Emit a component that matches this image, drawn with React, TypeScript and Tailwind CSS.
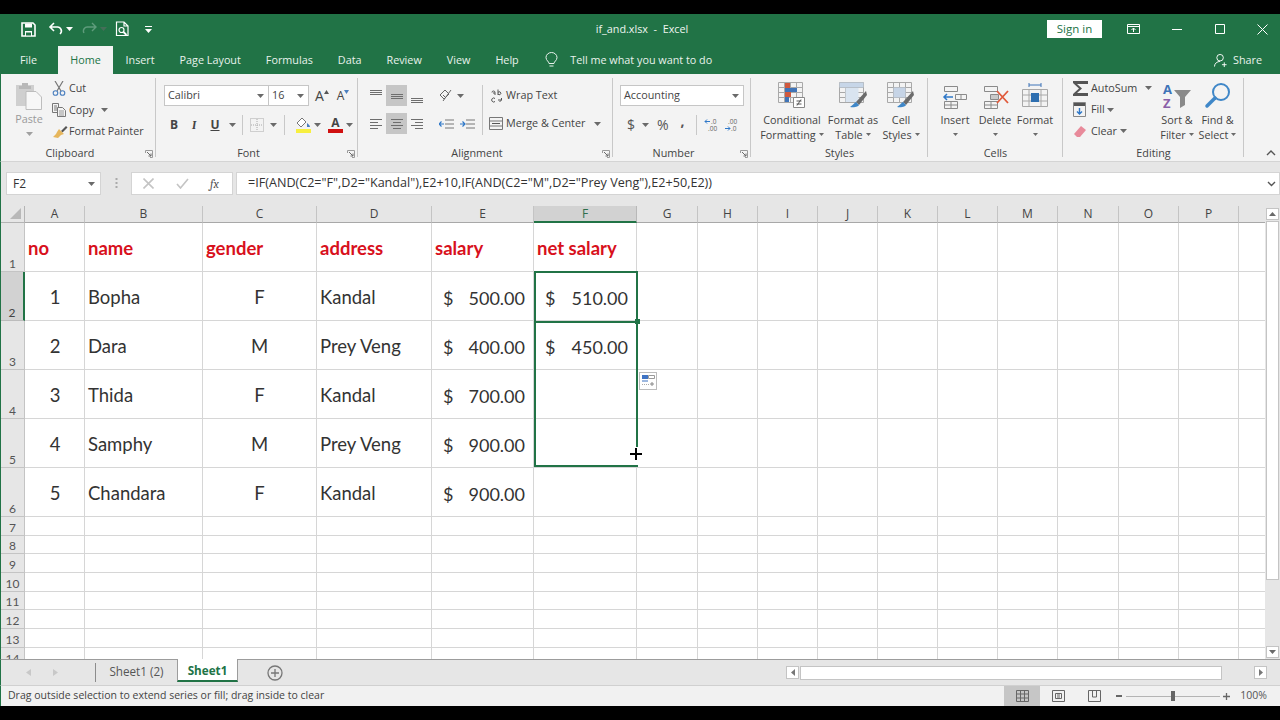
import type { ReactNode } from "react";

const uiFont = { fontFamily: '"Open Sans", "Noto Sans", sans-serif' };

const Caret = ({ className = "" }: { className?: string }) => (
  <svg width="7" height="4" viewBox="0 0 7 4" className={className}>
    <path d="M0 0h7L3.5 4z" fill="#6a6a6a" />
  </svg>
);

const SmallCaret = () => (
  <svg width="5" height="3" viewBox="0 0 5 3">
    <path d="M0 0h5L2.500 3z" fill="#6a6a6a" />
  </svg>
);

const Launcher = () => (
  <svg width="8" height="8" viewBox="0 0 8 8" className="absolute right-[3px] bottom-[3px]">
    <path d="M.5 3V.5H7.5V7.5H5" fill="none" stroke="#9a9a9a" />
    <path d="M2 2l4 4M3.5 6H6V3.5" fill="none" stroke="#6a6a6a" />
  </svg>
);

function Group({ label, width, children, launcher = true }: { label: string; width: string; children: ReactNode; launcher?: boolean }) {
  return (
    <div className={`relative flex h-full flex-col ${width}`}>
      <div className="absolute right-0 top-1 bottom-1 w-px bg-[#c8c8c8]" />
      <div className="flex-1">{children}</div>
      <div className={`relative flex h-[17px] items-center justify-center pt-[2px] text-[10.8px] text-[#444] ${launcher ? "pr-[17px]" : ""}`}>
        {label}
      </div>
      {launcher && <Launcher />}
    </div>
  );
}

function BigButton({ icon, lines, width }: { icon: ReactNode; lines: string[]; width: string }) {
  return (
    <div className={`flex flex-col items-center pt-[6px] text-[10.8px] leading-[15px] text-[#444] ${width}`}>
      <div className="flex h-[32px] items-center justify-center">{icon}</div>
      <div className="whitespace-nowrap">{lines[0]}</div>
      <div className="flex h-[15px] items-center gap-[3px] whitespace-nowrap">
        {lines[1]}
        <SmallCaret />
      </div>
    </div>
  );
}

const Combo = ({ text, width }: { text: string; width: string }) => (
  <div className={`flex h-[21px] items-center justify-between border border-[#c6c6c6] bg-white pl-[3px] pr-[4px] text-[10.8px] text-[#444] ${width}`}>
    {text}
    <Caret />
  </div>
);

const Lines = ({ ys, xs }: { ys: number[]; xs: [number, number][] }) => (
  <svg width="14" height="14" viewBox="0 0 14 14">
    {ys.map((y, i) => (
      <path key={y} d={`M${xs[i][0]} ${y}.5H${xs[i][1]}`} stroke="#6e6e6e" />
    ))}
  </svg>
);

const SaveIcon = () => (
  <svg width="15" height="15" viewBox="0 0 15 15">
    <path d="M1 1h11l2 2v11H1z" fill="none" stroke="#fff" strokeWidth="1.6" />
    <path d="M4 1.5h7v4H4zM4 9h7v5H4z" fill="#fff" />
    <path d="M5 10.5h5v3H5z" fill="#217346" />
  </svg>
);

const ScissorsIcon = () => (
  <svg width="14" height="15" viewBox="0 0 14 15" fill="none">
    <path d="M3 0l6 10M11 0L5 10" stroke="#777" strokeWidth="1.2" />
    <circle cx="3.5" cy="12" r="2.3" stroke="#4a7fbf" strokeWidth="1.1" />
    <circle cx="10.5" cy="12" r="2.3" stroke="#4a7fbf" strokeWidth="1.1" />
  </svg>
);

const CopyIcon = () => (
  <svg width="14" height="14" viewBox="0 0 14 14" fill="none" stroke="#777">
    <path d="M.5.5h6v9h-6zM2 3h3M2 5h3M2 7h3" />
    <path d="M5.5 4.5h5l3 3v6h-8z" fill="#f3f3f3" />
    <path d="M7 8h5M7 10h5M7 12h5" stroke="#999" />
  </svg>
);

const BrushIcon = () => (
  <svg width="16" height="14" viewBox="0 0 16 14">
    <path d="M9 6l5-5 1.5 1.5-5 5z" fill="#555" />
    <path d="M7 4l5 5-3 1-3 3-5-1 3-3 1-2z" fill="#e6b65c" />
  </svg>
);

const BorderIcon = () => (
  <svg width="14" height="14" viewBox="0 0 14 14" fill="none" stroke="#aaa" strokeDasharray="1 1">
    <path d="M.5.5h13v13H.5zM7 1v12M1 7h12" />
  </svg>
);

const BigGridIcon = ({ children }: { children: ReactNode }) => (
  <svg width="30" height="30" viewBox="0 0 30 30" fill="none">
    {children}
  </svg>
);

const tableLines = "M1.5 1.5h24v20h-24zM1.5 6.5h24M1.5 11.5h24M1.5 16.5h24M7.5 1.5v20M13.5 1.5v20M19.5 1.5v20";

const cols = ["A", "B", "C", "D", "E", "F", "G", "H", "I", "J", "K", "L", "M", "N", "O", "P", ""];

const rows = [
  { no: "no", name: "name", gender: "gender", address: "address", salary: "salary", net: "net salary", head: true },
  { no: "1", name: "Bopha", gender: "F", address: "Kandal", salary: "500.00", net: "510.00" },
  { no: "2", name: "Dara", gender: "M", address: "Prey Veng", salary: "400.00", net: "450.00" },
  { no: "3", name: "Thida", gender: "F", address: "Kandal", salary: "700.00", net: "" },
  { no: "4", name: "Samphy", gender: "M", address: "Prey Veng", salary: "900.00", net: "" },
  { no: "5", name: "Chandara", gender: "F", address: "Kandal", salary: "900.00", net: "" },
];

const cell = "flex items-center border-b border-r border-[#d6d6d6] overflow-hidden whitespace-nowrap pt-[4px]";

function Money({ value }: { value: string }) {
  return (
    <div className={`${cell} justify-between pl-[11px] pr-[8px] text-[18px]`}>
      {value && <span>$</span>}
      {value && <span>{value}</span>}
    </div>
  );
}

function RowHead({ n, active }: { n: number; active?: boolean }) {
  return (
    <div
      className={`flex items-end justify-center border-b border-r text-[12px] leading-[15px] ${
        active ? "border-r-2 border-b-[#bcbcbc] border-r-[#217346] bg-[#d2d2d2] text-[#444]" : "border-[#c4c4c4] bg-[#e6e6e6] text-[#555]"
      }`}
    >
      {n}
    </div>
  );
}

function Sheet() {
  return (
    <div
      className="relative grid h-[453px] flex-none grid-cols-[24px_60px_118px_114px_115px_102px_103px_61px_60px_60px_60px_60px_60px_60px_61px_60px_60px_27px] grid-rows-[17px_49px_49px_49px_49px_49px_49px_18.7px_18.7px_18.7px_18.7px_18.7px_18.7px_18.7px_18.7px] overflow-hidden bg-white text-[18.5px] text-[#333]"
      style={{ fontFamily: 'Lato, "Open Sans", sans-serif' }}
    >
      <div className="flex items-end justify-end border-b border-r border-[#b4b4b4] bg-[#e6e6e6] p-[3px]">
        <svg width="11" height="11" viewBox="0 0 11 11">
          <path d="M11 0v11H0z" fill="#b8b8b8" />
        </svg>
      </div>
      {cols.map((c) => (
        <div
          key={c}
          className={`flex items-center justify-center border-r text-[12px] ${
            c === "F"
              ? "border-b-2 border-b-[#217346] border-r-[#b8b8b8] bg-[#d2d2d2] text-[#2f6f4c]"
              : "border-b border-b-[#a8a8a8] border-r-[#c4c4c4] bg-[#e6e6e6] text-[#444]"
          }`}
          style={uiFont}
        >
          {c}
        </div>
      ))}
      {rows.map((r, i) => {
        const n = i + 1;
        const headText = "font-bold text-[#d8101c]";
        return [
          <RowHead key={`h${n}`} n={n} active={n === 2} />,
          <div key={`a${n}`} className={`${cell} ${r.head ? `${headText} pl-[3px]` : "justify-center pl-[1px]"}`}>{r.no}</div>,
          <div key={`b${n}`} className={`${cell} pl-[3px] ${r.head ? headText : ""}`}>{r.name}</div>,
          <div key={`c${n}`} className={`${cell} ${r.head ? `${headText} pl-[3px]` : "justify-center"}`}>{r.gender}</div>,
          <div key={`d${n}`} className={`${cell} pl-[3px] ${r.head ? headText : ""}`}>{r.address}</div>,
          r.head ? (
            <div key={`e${n}`} className={`${cell} pl-[3px] ${headText}`}>{r.salary}</div>
          ) : (
            <Money key={`e${n}`} value={r.salary} />
          ),
          r.head ? (
            <div key={`f${n}`} className={`${cell} pl-[3px] ${headText}`}>{r.net}</div>
          ) : (
            <Money key={`f${n}`} value={r.net} />
          ),
          ...Array.from({ length: 11 }, (_, k) => <div key={`x${n}-${k}`} className={cell} />),
        ];
      })}
      {[7, 8, 9, 10, 11, 12, 13, 14].map((n) => [
        <RowHead key={`h${n}`} n={n} />,
        ...Array.from({ length: 17 }, (_, k) => <div key={`x${n}-${k}`} className={cell} />),
      ])}

      {/* fill selection drawn over the cells */}
      <div className="absolute left-[533px] top-[65px] h-[196px] w-[104px] border-2 border-[#217346]">
        <div className="absolute inset-x-0 top-[48px] h-[2px] bg-[#217346]" />
        <div className="absolute right-[-4px] top-[46px] h-[5px] w-[5px] bg-[#217346]" />
        <div className="absolute right-[-2px] bottom-[0px] h-[18px] w-[2px] bg-white" />
      </div>
      <svg width="14" height="14" viewBox="0 0 14 14" className="absolute left-[628px] top-[241px]">
        <path d="M7 0v14M0 7h14" stroke="#fff" strokeWidth="4" />
        <path d="M7 1v12M1 7h12" stroke="#000" strokeWidth="2" />
      </svg>
      <div className="absolute left-[638px] top-[166px] flex h-[18px] w-[18px] items-center justify-center border border-[#bcbcbc] bg-white">
        <svg width="13" height="12" viewBox="0 0 13 12">
          <path d="M0 0h6v4H0z" fill="#3f74c4" />
          <path d="M6.5.5h6v3h-6z" fill="none" stroke="#999" />
          <path d="M0 5h6v2H0z" fill="#9db8e0" />
          <path d="M0 9.500h7" stroke="#aaa" strokeDasharray="1 1" />
          <path d="M10 7v4M8 9h4" stroke="#888" />
        </svg>
      </div>
    </div>
  );
}

export default function App() {
  return (
    <div className="flex h-[720px] w-[1280px] flex-col overflow-hidden bg-black" style={uiFont}>
      <div className="h-[14px] flex-none" />

      {/* title bar */}
      <div className="grid h-[30px] flex-none grid-cols-[1fr_auto_1fr] items-center bg-[#217346] text-white">
        <div className="flex items-center pl-[21px]">
          <SaveIcon />
          <svg width="16" height="14" viewBox="0 0 16 14" fill="none" stroke="#fff" strokeWidth="1.6" className="ml-[12px]">
            <path d="M6 1L2 5l4 4M2 5h7a4 4 0 0 1 3 7" />
          </svg>
          <Caret className="ml-[2px] brightness-[3]" />
          <svg width="15" height="14" viewBox="0 0 15 14" fill="none" stroke="#5f9c7c" strokeWidth="1.4" className="ml-[9px]">
            <path d="M10 1l4 4-4 4M14 5H6a4 4 0 0 0-4 6" />
          </svg>
          <Caret className="ml-[3px] opacity-50" />
          <svg width="15" height="16" viewBox="0 0 15 16" fill="none" stroke="#fff" strokeWidth="1.2" className="ml-[8px]">
            <path d="M9 1H1.500v13.500H13V5zM9 1v4h4" />
            <circle cx="6.500" cy="9" r="2.500" />
            <path d="M8.500 11l3 3" strokeWidth="1.800" />
          </svg>
          <svg width="7" height="7" viewBox="0 0 7 7" className="ml-[15px]">
            <path d="M0 .5h7" stroke="#fff" />
            <path d="M0 3h7L3.500 7z" fill="#fff" />
          </svg>
        </div>
        <div className="pt-[1px] pl-[4px] text-[10.8px] text-[#eef5f0]">if_and.xlsx&nbsp; - &nbsp;Excel</div>
        <div className="flex items-center justify-end">
          <div className="flex h-[18px] w-[55px] items-center justify-center bg-white text-[11.5px] text-[#217346]">Sign in</div>
          <svg width="13" height="10" viewBox="0 0 13 10" fill="none" stroke="#fff" className="ml-[25px]">
            <path d="M.5.500h12v9H.5zM.5 2.500h12M6.500 8V4M4.500 6l2-2 2 2" />
          </svg>
          <svg width="10" height="1" viewBox="0 0 10 1" className="ml-[32px]">
            <path d="M0 .5h10" stroke="#fff" />
          </svg>
          <svg width="10" height="10" viewBox="0 0 10 10" fill="none" stroke="#fff" className="ml-[33px]">
            <path d="M.5.5h9v9h-9z" />
          </svg>
          <svg width="11" height="11" viewBox="0 0 11 11" fill="none" stroke="#fff" className="ml-[32px] mr-[12px]">
            <path d="M.5.500l10 10M10.500.500l-10 10" />
          </svg>
        </div>
      </div>

      {/* tabs */}
      <div className="flex h-[30px] flex-none items-end bg-[#217346] text-[10.8px] text-[#e8f2ec]">
        <div className="ml-[8px] flex h-[28px] w-[50px] items-center pl-[12px]">File</div>
        <div className="flex h-[28px] w-[55px] items-center justify-center bg-[#f3f3f3] text-[#217346]">Home</div>
        {["Insert", "Page Layout", "Formulas", "Data", "Review", "View", "Help"].map((t) => (
          <div key={t} className="flex h-[28px] items-center whitespace-nowrap px-[12.5px]">{t}</div>
        ))}
        <div className="ml-[14px] flex h-[28px] items-center">
          <svg width="13" height="16" viewBox="0 0 13 16" fill="none" stroke="#e8f2ec">
            <path d="M4 11.500C4 9.500 1 8.500 1 5.500a5.500 5 0 0 1 11 0c0 3-3 4-3 6zM4.500 14h4" />
          </svg>
          <span className="ml-[12px]">Tell me what you want to do</span>
        </div>
        <div className="ml-auto flex h-[28px] items-center pr-[18px]">
          <svg width="14" height="15" viewBox="0 0 15 15" fill="none" stroke="#fff">
            <circle cx="6.500" cy="4.500" r="3.500" />
            <path d="M.5 14c0-3.500 3-5.500 6-5.500M11 9.500v5M8.500 12h5" />
          </svg>
          <span className="ml-[5px]">Share</span>
        </div>
      </div>

      {/* ribbon */}
      <div className="relative flex h-[87px] flex-none border-l border-[#217346] bg-[#f3f3f3] text-[#444]">
        <Group label="Clipboard" width="w-[155px]">
          <div className="flex pl-[12px]">
            <BigPaste />
            <div className="ml-[7px] flex flex-col pt-[4px] text-[10.7px]">
              <div className="flex h-[21px] items-center gap-[3px]"><ScissorsIcon /><span>Cut</span></div>
              <div className="flex h-[22px] items-center gap-[3px]">
                <CopyIcon />
                <span>Copy</span>
                <Caret className="ml-[4px]" />
              </div>
              <div className="flex h-[21px] items-center gap-[1px] whitespace-nowrap"><BrushIcon /><span>Format Painter</span></div>
            </div>
          </div>
        </Group>

        <Group label="Font" width="w-[202px]">
          <div className="pl-[8px] pt-[11px]">
            <div className="flex items-center">
              <Combo text="Calibri" width="w-[105px]" />
              <Combo text="16" width="w-[41px] -ml-px" />
              <span className="ml-[6px] text-[14px] leading-none">A</span>
              <svg width="5" height="4" viewBox="0 0 5 4" className="mb-[8px]"><path d="M0 4h5L2.500 0z" fill="#555" /></svg>
              <span className="ml-[8px] text-[12px] leading-none">A</span>
              <svg width="5" height="4" viewBox="0 0 5 4" className="mb-[8px]"><path d="M0 0h5L2.500 4z" fill="#4a7fbf" /></svg>
            </div>
            <div className="mt-[7px] flex h-[23px] items-center">
              <span className="w-[20px] text-center text-[12px] font-bold">B</span>
              <span className="w-[20px] text-center font-serif text-[12px] font-bold italic">I</span>
              <span className="w-[22px] text-center text-[12px] font-bold underline">U</span>
              <Caret className="ml-[3px]" />
              <div className="mx-[6px] h-[20px] w-px bg-[#c8c8c8]" />
              <span className="ml-[1px]"><BorderIcon /></span>
              <Caret className="ml-[6px]" />
              <div className="mx-[7px] h-[20px] w-px bg-[#c8c8c8]" />
              <svg width="15" height="16" viewBox="0 0 15 16" className="ml-[4px]">
                <path d="M6 1L1 6l4 4 5-5z" fill="#fff" stroke="#777" />
                <path d="M11 6c1 1 3 2 3 4h-3z" fill="#4a7fbf" />
                <path d="M0 12h15v4H0z" fill="#f7ef3f" />
              </svg>
              <Caret className="ml-[3px]" />
              <div className="ml-[7px] flex w-[15px] flex-col items-center">
                <span className="text-[12px] font-bold leading-[12px]">A</span>
                <div className="h-[4px] w-[15px] bg-[#d01010]" />
              </div>
              <Caret className="ml-[3px]" />
            </div>
          </div>
        </Group>

        <Group label="Alignment" width="w-[255px]">
          <div className="flex pl-[11px] pt-[11px]">
            <div className="flex flex-col gap-[7px]">
              <div className="flex items-center">
                <Lines ys={[1, 3, 5]} xs={[[1, 13], [1, 13], [1, 13]]} />
                <span className="ml-[3px] flex h-[21px] w-[21px] items-center justify-center bg-[#c6c6c6]">
                  <Lines ys={[5, 7, 9]} xs={[[1, 13], [1, 13], [1, 13]]} />
                </span>
                <span className="ml-[3px]"><Lines ys={[9, 11, 13]} xs={[[1, 13], [1, 13], [1, 13]]} /></span>
              </div>
              <div className="flex items-center">
                <Lines ys={[2, 5, 8, 11]} xs={[[1, 13], [1, 9], [1, 13], [1, 9]]} />
                <span className="ml-[3px] flex h-[21px] w-[21px] items-center justify-center bg-[#c6c6c6]">
                  <Lines ys={[2, 5, 8, 11]} xs={[[1, 13], [3, 11], [1, 13], [3, 11]]} />
                </span>
                <span className="ml-[3px]"><Lines ys={[2, 5, 8, 11]} xs={[[1, 13], [5, 13], [1, 13], [5, 13]]} /></span>
              </div>
            </div>
            <div className="ml-[15px] flex flex-col gap-[7px]">
              <div className="flex h-[21px] items-center">
                <svg width="15" height="13" viewBox="0 0 15 13" fill="none" stroke="#666">
                  <path d="M1 6l5-5 4 4-5 5zM4 6l2 2M12 1l-8 11" />
                </svg>
                <Caret className="ml-[3px]" />
              </div>
              <div className="flex h-[21px] items-center gap-[6px]">
                <svg width="15" height="12" viewBox="0 0 15 12" fill="none">
                  <path d="M6 2h9M6 6h9M6 10h9" stroke="#777" />
                  <path d="M5 6H0M2.500 3.500L0 6l2.500 2.500" stroke="#2f78c8" strokeWidth="1.200" />
                </svg>
                <svg width="15" height="12" viewBox="0 0 15 12" fill="none">
                  <path d="M6 2h9M6 6h9M6 10h9" stroke="#777" />
                  <path d="M0 6h5M2.500 3.500L5 6 2.500 8.500" stroke="#2f78c8" strokeWidth="1.200" />
                </svg>
              </div>
            </div>
            <div className="ml-[7px] h-[50px] w-px bg-[#c8c8c8]" />
            <div className="ml-[6px] flex flex-col gap-[7px] text-[10.8px]">
              <div className="flex h-[21px] items-center gap-[3px] pl-[2px]">
                <svg width="12" height="14" viewBox="0 0 12 14" fill="none" stroke="#555">
                  <path d="M1 3.500a1.500 1.500 0 1 1 3 0V6M4 4H2M7 .5V6M7 3.500a1.500 1.500 0 1 1 0 1.500M4 9.500a2 2 0 1 0 0 3M7 11h3.500V9M10.500 11L8.500 13" />
                </svg>
                Wrap Text
              </div>
              <div className="flex h-[21px] items-center gap-[3px]">
                <svg width="14" height="13" viewBox="0 0 14 13" fill="none" stroke="#777">
                  <path d="M.5.500h13v12H.5zM.5 4h13M.5 9h13" />
                  <path d="M3 6.500h8" stroke="#555" />
                </svg>
                <span className="whitespace-nowrap">Merge &amp; Center</span>
                <Caret className="ml-[6px]" />
              </div>
            </div>
          </div>
        </Group>

        <Group label="Number" width="w-[138px]">
          <div className="pl-[7px] pt-[11px]">
            <Combo text="Accounting" width="w-[124px]" />
            <div className="mt-[7px] flex h-[23px] items-center pl-[7px]">
              <span className="w-[8px] text-[14px] text-[#555]">$</span>
              <Caret className="ml-[7px]" />
              <span className="ml-[8px] text-[14px] text-[#555]">%</span>
              <span className="mb-[8px] ml-[12px] text-[14px] font-bold leading-none text-[#555]">,</span>
              <div className="ml-[11px] h-[20px] w-px bg-[#c8c8c8]" />
              <svg width="14" height="14" viewBox="0 0 14 14" className="ml-[7px]">
                <path d="M6 3.500H1M3 1.500l-2 2 2 2" stroke="#2f78c8" fill="none" />
                <text x="7" y="6" fontSize="6.500" fill="#666">.0</text>
                <text x="4" y="13" fontSize="6.500" fill="#666">.00</text>
              </svg>
              <svg width="14" height="14" viewBox="0 0 14 14" className="ml-[6px]">
                <text x="4" y="6" fontSize="6.500" fill="#666">.00</text>
                <path d="M1 10.500h5M4 8.500l2 2-2 2" stroke="#2f78c8" fill="none" />
                <text x="7" y="13" fontSize="6.500" fill="#666">.0</text>
              </svg>
            </div>
          </div>
        </Group>

        <Group label="Styles" width="w-[177px]" launcher={false}>
          <div className="flex pl-[3px]">
            <BigButton
              width="w-[76px]"
              lines={["Conditional", "Formatting"]}
              icon={
                <BigGridIcon>
                  <path d={tableLines} stroke="#a8a8a8" />
                  <path d="M8 2h5v5H8z" fill="#d0593e" />
                  <path d="M8 7h12v4H8z" fill="#3f74b8" />
                  <path d="M8 11h6v5H8z" fill="#d0593e" />
                  <path d="M8 16h4v5H8z" fill="#3f74b8" />
                  <path d="M16.500 16.500h11v10h-11z" fill="#fff" stroke="#888" />
                  <path d="M19.500 20h5M19.500 23h5M24 18.500l-4 6" stroke="#555" />
                </BigGridIcon>
              }
            />
            <BigButton
              width="w-[46px]"
              lines={["Format as", "Table"]}
              icon={
                <BigGridIcon>
                  <path d={tableLines} stroke="#a8a8a8" />
                  <path d="M1.500 1.500h24v5h-24z" fill="#c7d6e8" />
                  <path d="M7.500 7h13v14h-13z" fill="#d9e4f0" />
                  <path d="M28 10L18 21l3 3 8-10z" fill="#6b6b6b" />
                  <path d="M18 21c-2 1-3 3-6 5 5 1 9-1 9-2z" fill="#3f87c8" />
                </BigGridIcon>
              }
            />
            <div className="ml-[3px]">
              <BigButton
                width="w-[44px]"
                lines={["Cell", "Styles"]}
                icon={
                  <BigGridIcon>
                    <path d={tableLines} stroke="#a8a8a8" />
                    <path d="M7.500 6.500h12v10h-12z" fill="#c6d4e6" />
                    <path d="M27 10L17 21l3 3 8-10z" fill="#6b6b6b" />
                    <path d="M17 21c-2 1-3 3-6 5 5 1 9-1 9-2z" fill="#3f87c8" />
                  </BigGridIcon>
                }
              />
            </div>
          </div>
        </Group>

        <Group label="Cells" width="w-[135px]" launcher={false}>
          <div className="flex pl-[7px]">
            <CellButton
              label="Insert"
              icon={
                <BigGridIcon>
                  <path d="M4.500 5.500h13v5h-13zM15.500 13.500h11v5h-11zM21 14v4M4.500 20.500h13v7h-13zM11 21v6M5 24h12" stroke="#8a8a8a" />
                  <path d="M13 16H4M7 13l-3 3 3 3" stroke="#2f78c8" strokeWidth="1.500" />
                </BigGridIcon>
              }
            />
            <CellButton
              label="Delete"
              icon={
                <BigGridIcon>
                  <path d="M4.500 5.500h13v5h-13zM4.500 20.500h13v7h-13zM11 21v6M5 24h12" stroke="#8a8a8a" />
                  <path d="M10.500 13.500h8v5h-8z" fill="#c9c9c9" stroke="#8a8a8a" />
                  <path d="M17 10l11 12M28 10L17 22" stroke="#e0593a" strokeWidth="1.800" />
                </BigGridIcon>
              }
            />
            <CellButton
              label="Format"
              icon={
                <BigGridIcon>
                  <path d="M2.500 8.500h25v17h-25zM9 9v16M21 9v16M3 14h24M3 20h24" stroke="#a8a8a8" />
                  <path d="M11 12h8v9h-8z" fill="#2f6fb0" />
                  <path d="M9 4h12M9 2v4M21 2v4" stroke="#3f74b8" />
                </BigGridIcon>
              }
            />
          </div>
        </Group>

        <Group label="Editing" width="w-[181px]" launcher={false}>
          <div className="flex pl-[10px]">
            <div className="flex w-[84px] flex-col pt-[3px] text-[10.8px]">
              <div className="flex h-[22px] items-center">
                <svg width="15" height="15" viewBox="0 0 15 15"><path d="M0 0h15v3H4l5 4.500L4 12h11v3H0v-2l6-5.500L0 2z" fill="#555" /></svg>
                <span className="ml-[3px]">AutoSum</span>
                <Caret className="ml-[8px]" />
              </div>
              <div className="flex h-[21px] items-center">
                <svg width="14" height="15" viewBox="0 0 14 15" fill="none">
                  <path d="M.5.500h12v14H.5z" stroke="#888" />
                  <path d="M1 1h11v3H1z" fill="#555" />
                  <path d="M6.500 6v6M4 9.500l2.500 2.500L9 9.500" stroke="#2f78c8" strokeWidth="1.400" />
                </svg>
                <span className="ml-[4px]">Fill</span>
                <Caret className="ml-[2px]" />
              </div>
              <div className="flex h-[22px] items-center">
                <svg width="14" height="13" viewBox="0 0 14 13"><path d="M8 1l5 4-6 7H4L1 9z" fill="#e88a9a" /></svg>
                <span className="ml-[4px]">Clear</span>
                <Caret className="ml-[3px]" />
              </div>
            </div>
            <BigButton
              width="w-[40px]"
              lines={["Sort &", "Filter"]}
              icon={
                <svg width="30" height="30" viewBox="0 0 30 30">
                  <text x="1" y="13" fontSize="13" fontWeight="700" fill="#3f74b8">A</text>
                  <text x="1" y="27" fontSize="13" fontWeight="700" fill="#8a5fa8">Z</text>
                  <path d="M12 9h17l-6 7v8l-5 3V16z" fill="#8a8a8a" />
                </svg>
              }
            />
            <BigButton
              width="w-[41px]"
              lines={["Find &", "Select"]}
              icon={
                <svg width="28" height="28" viewBox="0 0 28 28" fill="none">
                  <circle cx="17" cy="10" r="8" stroke="#3f87c8" strokeWidth="2" />
                  <path d="M11 16L3 24" stroke="#3f87c8" strokeWidth="3.500" strokeLinecap="round" />
                </svg>
              }
            />
          </div>
        </Group>

        <svg width="10" height="6" viewBox="0 0 10 6" fill="none" stroke="#555" strokeWidth="1.400" className="absolute bottom-[5px] right-[4px]">
          <path d="M1 5l4-4 4 4" />
        </svg>
      </div>

      {/* formula bar */}
      <div className="flex h-[45px] flex-none items-start border-l border-t border-l-[#217346] border-t-[#d4d4d4] bg-[#e6e6e6] pl-[5px] pt-[10px]">
        <div className="flex h-[23px] w-[95px] items-center justify-between border border-[#d4d4d4] bg-white pl-[6px] pr-[5px] text-[12px] text-[#333]">
          F2
          <Caret />
        </div>
        <svg width="3" height="12" viewBox="0 0 3 12" className="ml-[14px] mt-[6px]">
          <path d="M1.500 0v12" stroke="#aaa" strokeDasharray="2 2" strokeWidth="2" />
        </svg>
        <div className="ml-[13px] flex h-[23px] w-[102px] items-center border border-[#d4d4d4] bg-white">
          <svg width="11" height="11" viewBox="0 0 11 11" fill="none" stroke="#c4c4c4" strokeWidth="1.600" className="ml-[11px]">
            <path d="M.5.500l10 10M10.500.500l-10 10" />
          </svg>
          <svg width="13" height="11" viewBox="0 0 13 11" fill="none" stroke="#c4c4c4" strokeWidth="1.600" className="ml-[22px]">
            <path d="M1 6l3.500 4L12 1" />
          </svg>
          <span className="ml-[21px] font-serif text-[12px] italic text-[#555]">fx</span>
        </div>
        <div className="ml-[3px] flex h-[23px] flex-1 items-center justify-between border border-[#d4d4d4] bg-white pl-[11px] pr-[3px] text-[12.6px] text-[#333]">
          <span>=IF(AND(C2="F",D2="Kandal"),E2+10,IF(AND(C2="M",D2="Prey Veng"),E2+50,E2))</span>
          <svg width="9" height="6" viewBox="0 0 9 6" fill="none" stroke="#555" strokeWidth="1.400"><path d="M1 1l3.500 3.500L8 1" /></svg>
        </div>
      </div>

      {/* worksheet */}
      <div className="flex flex-none border-l border-[#217346] bg-[#e6e6e6]">
        <div className="min-w-0 flex-1 overflow-hidden">
          <Sheet />
        </div>
        <div className="flex w-[15px] flex-none flex-col items-center pt-[2px]">
          <div className="flex h-[12px] w-[13px] items-center justify-center border border-[#c4c4c4] bg-white">
            <Caret className="rotate-180" />
          </div>
          <div className="mt-[1px] h-[359px] w-[13px] border border-[#c4c4c4] bg-white" />
          <div className="flex-1" />
          <div className="mb-[1px] flex h-[12px] w-[13px] items-center justify-center border border-[#c4c4c4] bg-white">
            <Caret />
          </div>
        </div>
      </div>

      {/* sheet tabs */}
      <div className="relative flex h-[26px] flex-none items-center border-l border-t border-l-[#217346] border-t-[#9c9c9c] bg-[#e6e6e6] text-[11.7px]">
        <svg width="5" height="7" viewBox="0 0 5 7" className="ml-[25px]"><path d="M5 0v7L0 3.500z" fill="#c8c8c8" /></svg>
        <svg width="5" height="7" viewBox="0 0 5 7" className="ml-[22px]"><path d="M0 0v7l5-3.500z" fill="#c8c8c8" /></svg>
        <div className="ml-[37px] h-[19px] w-px bg-[#8c8c8c]" />
        <div className="flex h-full w-[81px] items-center justify-center pb-[2px] text-[#555]">Sheet1 (2)</div>
        <div className="-mt-px flex h-[23px] w-[61px] flex-none items-center justify-center self-start border-x border-b-2 border-x-[#9c9c9c] border-b-[#217346] bg-white pt-[2px] font-bold text-[#217346]">
          Sheet1
        </div>
        <svg width="16" height="16" viewBox="0 0 16 16" fill="none" stroke="#777" className="ml-[29px]">
          <circle cx="8" cy="8" r="7" strokeWidth="1.300" />
          <path d="M8 4v8M4 8h8" strokeWidth="1.300" />
        </svg>
        <div className="ml-auto mr-[13px] flex w-[481px] items-center">
          <div className="flex h-[13px] w-[13px] items-center justify-center border border-[#c4c4c4] bg-white">
            <svg width="4" height="7" viewBox="0 0 4 7"><path d="M4 0v7L0 3.500z" fill="#777" /></svg>
          </div>
          <div className="ml-[1px] h-[14px] w-[422px] border border-[#c4c4c4] bg-white" />
          <div className="flex-1" />
          <div className="flex h-[13px] w-[13px] items-center justify-center border border-[#c4c4c4] bg-white">
            <svg width="4" height="7" viewBox="0 0 4 7"><path d="M0 0v7l4-3.500z" fill="#777" /></svg>
          </div>
        </div>
      </div>

      {/* status bar */}
      <div className="flex h-[21px] flex-none items-center border-l border-t border-l-[#217346] border-t-[#d0d0d0] bg-[#f1f1f1] pl-[7px] text-[10.5px] text-[#444]">
        <span>Drag outside selection to extend series or fill; drag inside to clear</span>
        <div className="ml-auto flex h-full items-center pr-[13px]">
          <div className="flex h-full w-[36px] items-center justify-center bg-[#c6c6c6]">
            <svg width="13" height="12" viewBox="0 0 13 12" fill="none" stroke="#666">
              <path d="M.5.500h12v11H.5zM4.500 1v10M8.500 1v10M1 4h11M1 8h11" />
            </svg>
          </div>
          <div className="flex w-[36px] justify-center">
            <svg width="13" height="12" viewBox="0 0 13 12" fill="none" stroke="#666">
              <path d="M.5.500h12v11H.5zM3.500 3.500h6v5h-6zM5 5h3M5 7h3" />
            </svg>
          </div>
          <div className="flex w-[36px] justify-center">
            <svg width="13" height="12" viewBox="0 0 13 12" fill="none" stroke="#666">
              <path d="M.5.500h12v11H.5zM4.500 1v6h4V1" />
            </svg>
          </div>
          <div className="ml-[4px] h-[2px] w-[6px] bg-[#666]" />
          <div className="relative ml-[4px] h-px w-[94px] bg-[#b4b4b4]">
            <div className="absolute left-[45px] top-[-5px] h-[10px] w-[4px] bg-[#666]" />
          </div>
          <svg width="7" height="7" viewBox="0 0 7 7" className="ml-[3px]"><path d="M3.500 0v7M0 3.500h7" stroke="#666" strokeWidth="1.300" /></svg>
          <span className="ml-[10px] text-[#555]">100%</span>
        </div>
      </div>

      <div className="flex-1" />
    </div>
  );
}

function BigPaste() {
  return (
    <div className="flex w-[32px] flex-col items-center pt-[8px] text-[10.8px] leading-[15px] text-[#9a9a9a]">
      <svg width="28" height="28" viewBox="0 0 28 28">
        <path d="M1 3h18v21H1z" fill="#cfcfcf" />
        <path d="M7 1h6v3h3v3H4V4h3z" fill="#b8b8b8" />
        <path d="M11 9.500h10l5.500 5.500v12.500H11z" fill="#f7f7f7" stroke="#bdbdbd" />
      </svg>
      <div className="mt-[1px]">Paste</div>
      <Caret className="mt-[6px] opacity-60" />
    </div>
  );
}

function CellButton({ label, icon }: { label: string; icon: ReactNode }) {
  return (
    <div className="flex w-[40px] flex-col items-center pt-[6px] text-[10.8px] leading-[15px] text-[#444]">
      <div className="flex h-[32px] items-center justify-center">{icon}</div>
      <div>{label}</div>
      <div className="flex h-[15px] items-center"><SmallCaret /></div>
    </div>
  );
}
